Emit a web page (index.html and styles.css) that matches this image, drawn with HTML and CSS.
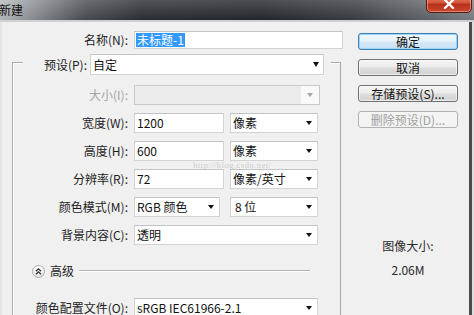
FILE: index.html
```html
<!DOCTYPE html>
<html lang="zh-CN">
<head>
<meta charset="utf-8">
<title>新建</title>
<link rel="stylesheet" href="styles.css">
</head>
<body>
<div class="window">
  <div class="titlebar">
    <span class="title">新建</span>
    <div class="close">
      <svg width="12" height="10" viewBox="0 0 12 10"><path d="M2 1 L10 9 M10 1 L2 9" stroke="#fff" stroke-width="2.4" stroke-linecap="round"/></svg>
    </div>
  </div>
  <div class="dialog">
    <div class="main">
      <div class="row name-row">
        <span class="lbl lbl-top">名称(N):</span>
        <div class="field input name-input"><span class="hl">未标题-1</span></div>
      </div>
      <div class="group">
        <div class="group-head">
          <span class="lbl lbl-preset">预设(P):</span>
          <div class="field select preset">自定<i class="arrow big"></i></div>
        </div>
        <div class="row first">
          <span class="lbl disabled-text">大小(I):</span>
          <div class="field select disabled w-size"><i class="arrow grey"></i></div>
        </div>
        <div class="row">
          <span class="lbl">宽度(W):</span>
          <div class="field input w-num">1200</div>
          <div class="field select w-unit">像素<i class="arrow"></i></div>
        </div>
        <div class="row">
          <span class="lbl">高度(H):</span>
          <div class="field input w-num">600</div>
          <div class="field select w-unit">像素<i class="arrow"></i></div>
        </div>
        <div class="row">
          <span class="lbl">分辨率(R):</span>
          <div class="field input w-num">72</div>
          <div class="field select w-unit">像素/英寸<i class="arrow"></i></div>
        </div>
        <div class="row">
          <span class="lbl">颜色模式(M):</span>
          <div class="field select w-mode">RGB 颜色<i class="arrow"></i></div>
          <div class="field select w-unit bits">8 位<i class="arrow"></i></div>
        </div>
        <div class="row">
          <span class="lbl">背景内容(C):</span>
          <div class="field select w-full">透明<i class="arrow"></i></div>
        </div>
        <div class="adv">
          <svg class="adv-icon" width="13" height="13" viewBox="0 0 13 13">
            <defs><linearGradient id="g" x1="0" y1="0" x2="0" y2="1"><stop offset="0" stop-color="#ffffff"/><stop offset="1" stop-color="#e2e2e2"/></linearGradient></defs>
            <circle cx="6.5" cy="6.5" r="6" fill="url(#g)" stroke="#a8a8a8"/>
            <polyline points="4,6.2 6.5,3.8 9,6.2" fill="none" stroke="#333" stroke-width="1.3"/>
            <polyline points="4,9.2 6.5,6.8 9,9.2" fill="none" stroke="#333" stroke-width="1.3"/>
          </svg>
          <span class="adv-text">高级</span>
          <span class="rule"></span>
        </div>
        <div class="row profile">
          <span class="lbl">颜色配置文件(O):</span>
          <div class="field select w-full">sRGB IEC61966-2.1<i class="arrow"></i></div>
        </div>
      </div>
    </div>
    <div class="side">
      <div class="btn primary">确定</div>
      <div class="btn">取消</div>
      <div class="btn">存储预设(S)...</div>
      <div class="btn disabled">删除预设(D)...</div>
      <div class="size-info">
        <div>图像大小:</div>
        <div>2.06M</div>
      </div>
    </div>
  </div>
  <div class="watermark">http://blog.csdn.net/</div>
</div>
</body>
</html>
```

FILE: styles.css
```css
* { box-sizing: border-box; }
html, body { margin: 0; padding: 0; }
body {
  width: 474px;
  height: 315px;
  overflow: hidden;
  background: #dcdcdc;
  font-family: "Noto Sans CJK SC", "Noto Sans", sans-serif;
  font-size: 12px;
  color: #1c1c1c;
}
.window {
  position: relative;
  width: 474px;
  height: 315px;
  display: flex;
  flex-direction: column;
}
.titlebar {
  position: relative;
  flex: none;
  height: 22px;
  border-bottom: 2px solid #cfd0d1;
  background:
    linear-gradient(to bottom, rgba(255,255,255,0.18), rgba(0,0,0,0.05)),
    linear-gradient(to right, #b9bcbf 0%, #8c9095 7%, #4a4e53 18%, #2b2f34 30%, #24282d 55%, #3a3f45 75%, #62676d 90%, #7c8187 100%);
}
.title {
  display: block;
  margin-left: -1px;
  line-height: 20px;
  font-size: 12px;
  color: #111;
}
.close {
  position: absolute;
  right: 2px;
  top: -6px;
  width: 46px;
  height: 19px;
  border: 1px solid #5a1a12;
  border-radius: 0 0 5px 5px;
  background: linear-gradient(to bottom, #e88a74 0%, #d4553b 45%, #b8301c 55%, #c9462c 100%);
  box-shadow: inset 0 0 0 1px rgba(255,200,180,0.5);
  display: flex;
  align-items: center;
  justify-content: center;
  padding-top: 1px;
}
.dialog {
  flex: 1;
  display: flex;
  background: #f0f0f0;
  width: 472px;
  border-right: 3px solid #4b4b4b;
  padding-top: 9px;
  box-shadow: inset 2px 0 0 #e4e4e4;
}
.main {
  flex: none;
  width: 343px;
}
.row {
  display: flex;
  align-items: center;
  height: 20px;
  margin-top: 8px;
}
.lbl {
  flex: none;
  width: 115px;
  margin-right: 6px;
  text-align: right;
  line-height: 16px;
  white-space: nowrap;
  color: #1c1c1c;
}
.disabled-text { color: #a3a3a3; }
.name-row {
  height: 18px;
  margin-top: 0;
}
.lbl-top { width: 128px; }
.field {
  flex: none;
  display: flex;
  align-items: center;
  height: 100%;
  background: #fff;
  border: 1px solid #d3d3d3;
  border-top-color: #c4c4c4;
  padding-left: 2px;
  line-height: 16px;
  white-space: nowrap;
  color: #111;
}
.name-input {
  width: 209px;
  padding-left: 1px;
}
.hl {
  background: #3399ff;
  color: #fff;
  padding: 0 1px;
  line-height: 14px;
}
.arrow {
  margin-left: auto;
  margin-right: 5px;
  width: 0;
  height: 0;
  border-left: 3px solid transparent;
  border-right: 3px solid transparent;
  border-top: 4px solid #111;
}
.arrow.big {
  margin-right: 4px;
  border-left-width: 3.5px;
  border-right-width: 3.5px;
  border-top-width: 5px;
}
.arrow.grey {
  border-top-color: #a6a6a6;
  margin-right: 6px;
}
.group {
  margin-top: 13px;
  margin-left: 12px;
  width: 329px;
  height: 260px;
  border: 1px solid #a9a9a9;
  border-bottom: none;
  box-shadow: inset 1px 1px 0 #fff;
}
.group-head {
  display: flex;
  align-items: center;
  width: 308px;
  height: 21px;
  margin-top: -9px;
  margin-left: 10px;
  padding-right: 7px;
  background: #f0f0f0;
}
.lbl-preset {
  width: 64px;
  margin-right: 3px;
}
.preset { width: 234px; }
.row.first { margin-top: 10px; }
.w-size {
  width: 186px;
  background: linear-gradient(to right, #ebebeb calc(100% - 18px), #f9f9f9 calc(100% - 18px));
  border-color: #c9c9c9;
}
.w-num { width: 90px; }
.w-unit { width: 88px; margin-left: 6px; }
.w-mode { width: 86px; }
.bits { margin-left: 10px; padding-left: 4px; }
.w-full { width: 184px; }
.adv {
  display: flex;
  align-items: center;
  height: 20px;
  margin-top: 16px;
  padding-left: 19px;
  width: 297px;
}
.adv-icon { flex: none; display: block; }
.adv-text {
  margin-left: 5px;
  line-height: 16px;
}
.rule {
  flex: 1;
  margin-left: 5px;
  height: 2px;
  border-top: 1px solid #b4b4b4;
  border-bottom: 1px solid #fff;
}
.row.profile { margin-top: 17px; }
.side {
  flex: none;
  width: 100px;
  margin-left: 15px;
  padding-top: 2px;
  display: flex;
  flex-direction: column;
}
.btn {
  height: 17px;
  margin-bottom: 9px;
  border: 1px solid #707070;
  border-radius: 3px;
  background: linear-gradient(to bottom, #f4f4f4 0%, #ececec 48%, #dedede 52%, #d2d2d2 100%);
  box-shadow: inset 0 0 0 1px rgba(255,255,255,0.6);
  text-align: center;
  line-height: 15px;
  font-size: 12px;
  color: #111;
}
.btn.primary {
  border-color: #3c7fb1;
  background: linear-gradient(to bottom, #f1f8fd 0%, #e5f1fb 48%, #d6e9f8 52%, #c6e0f6 100%);
  box-shadow: inset 0 0 0 1px #9fd5f7;
}
.btn.disabled {
  margin-bottom: 0;
  border-color: #adb2b5;
  background: #f4f4f4;
  box-shadow: none;
  color: #a0a0a0;
}
.size-info {
  margin-top: 106px;
  text-align: center;
  line-height: 24px;
  color: #2a2a2a;
}
.watermark {
  position: absolute;
  left: 193px;
  top: 161px;
  font-family: "Liberation Serif", serif;
  font-size: 9px;
  line-height: 8px;
  letter-spacing: 0.3px;
  color: rgba(110, 110, 110, 0.3);
  pointer-events: none;
}
```
